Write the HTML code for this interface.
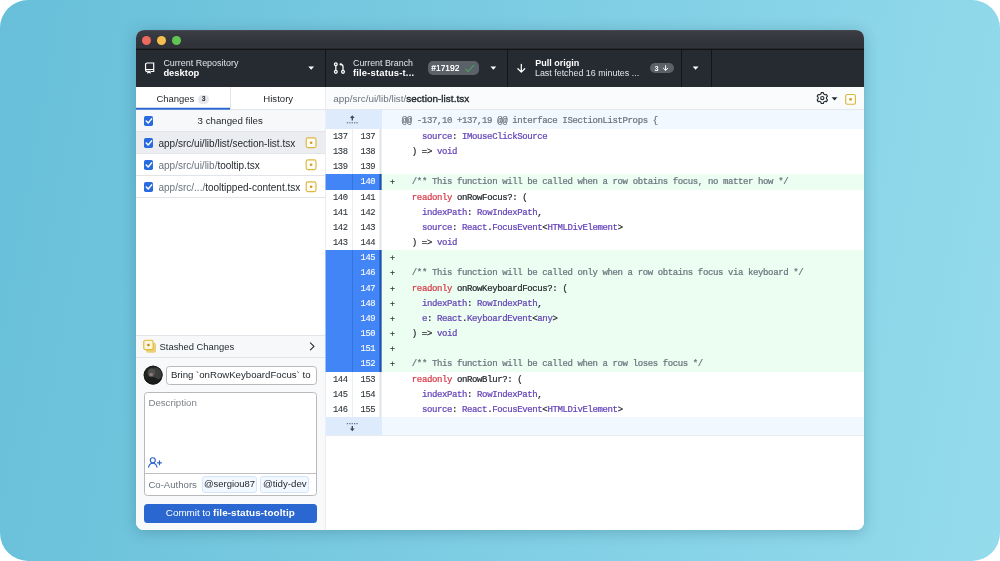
<!DOCTYPE html>
<html><head><meta charset="utf-8"><title>GitHub Desktop</title>
<style>
*{box-sizing:border-box;margin:0;padding:0}
html,body{width:1000px;height:561px;overflow:hidden;background:#fff}
body{font-family:"Liberation Sans",sans-serif;position:relative;color:#24292e}
#bg{position:absolute;left:0;top:0;width:1000px;height:561px;border-radius:28px;background:linear-gradient(100deg,#67bfd9 0%,#7dcde3 50%,#94dbec 100%)}
#win{will-change:transform;position:absolute;left:136px;top:30px;width:728px;height:500px;border-radius:8px;background:#fff;overflow:hidden;box-shadow:0 2px 15px rgba(0,45,65,.24)}
.abs{position:absolute}
#title{position:absolute;left:0;top:0;width:728px;height:20px;background:linear-gradient(#50525a 0,#3b3e45 1px,#363940 6px,#303339 14px);border-bottom:1px solid #121316;box-shadow:inset 0 -1px 0 #25272b}
.tl{position:absolute;top:6px;width:9px;height:9px;border-radius:50%}
#toolbar{position:absolute;left:0;top:20px;width:728px;height:37px;background:#262a31;color:#fff}
.tsep{position:absolute;top:0;width:1px;height:37px;background:#141518}
.t1{position:absolute;font-size:8.9px;color:#e1e4e8;white-space:nowrap;line-height:10px}
.t2{position:absolute;font-size:9.4px;font-weight:700;color:#fff;white-space:nowrap;line-height:10px}
.caret{position:absolute;width:0;height:0;border-left:3px solid transparent;border-right:3px solid transparent;border-top:3.2px solid #fff}
/* sidebar */
#side{position:absolute;left:0;top:57px;width:189.5px;height:443px;background:#fff;border-right:1px solid #eaecee}
.tab{position:absolute;top:0;height:23px;font-size:9.45px;line-height:23px;text-align:center;color:#24292e;border-bottom:1px solid #e1e4e8}
.cnt{display:inline-block;background:#e4e6e9;border-radius:4.5px;font-size:6.8px;font-weight:700;line-height:8.6px;height:8.4px;padding:0 3.4px;vertical-align:0.6px;margin-left:4.2px;color:#24292e}
.frow{position:absolute;left:0;width:189px;height:22px;border-bottom:1px solid #e1e4e8;font-size:10px;line-height:22.6px;white-space:nowrap;color:#24292e}
.frow .p{color:#6a737d}
.cb{position:absolute;left:7.6px;top:5.8px;width:9.8px;height:9.8px;border-radius:1.7px;background:#2a6ae0}
.cb svg{position:absolute;left:0;top:0}
.st{position:absolute;left:169.8px;top:6.6px;width:11px;height:11px;border:1.2px solid #dfb83e;border-radius:2px}
.st:after{content:"";position:absolute;left:2.9px;top:2.9px;width:2.8px;height:2.8px;border-radius:50%;background:#d4982a}
.fn{position:absolute;left:22.5px;top:1px}
.chip{top:389.2px;height:16.4px;border:1px solid #d4e5fb;border-radius:3px;background:#f1f8ff;font-size:9.45px;line-height:14.6px;text-align:center;white-space:nowrap;color:#24292e}
/* diff */
#diff{position:absolute;left:190px;top:57px;width:538px;height:443px;background:#fff}
#dh{position:absolute;left:0;top:0;width:538px;height:23px;background:#fafbfc;border-bottom:1px solid #e5e8eb;font-size:9.9px;line-height:24.4px;padding-left:7.3px;color:#6a737d;white-space:nowrap}
#dh b{font-weight:400;color:#24292e;-webkit-text-stroke:.38px;letter-spacing:.06px}
#hunk{position:absolute;left:0;top:23px;width:538px;height:19px;background:#f1f8ff}
#hunk .hg,#exp .hg{position:absolute;left:0;top:0;width:56px;height:100%;background:#deebfd;box-shadow:-1px 0 0 #eaf1fc}
.mono,code,.g1,.g2,s{font-family:"Liberation Mono",monospace;font-size:9px;letter-spacing:-0.383px;-webkit-text-stroke:.22px}
#hunk .ht{position:absolute;left:75.8px;top:0;line-height:22px;color:#6a737d;white-space:pre}
#rows{position:absolute;left:0;top:42px;width:538px}
.r{position:relative;height:15.17px;line-height:17.4px;width:538px;white-space:pre;color:#24292e}
.r.a{background:#ecfef1}
.g1,.g2{position:absolute;top:0;height:100%;text-align:right;color:#2f353b;font-size:8.8px;-webkit-text-stroke:.1px}
.g1{left:0;width:26.5px;padding-right:3.9px;border-right:1px solid #eceef0}
.g2{left:26.5px;width:26.5px;padding-right:3.8px}
.gs{position:absolute;left:53px;top:0;width:3px;height:100%;background:linear-gradient(90deg,#f0f1f2 0,#f0f1f2 1px,#e1e2e4 1px,#e1e2e4 2px,#f0f1f2 2px,#f0f1f2 3px)}
.r.a .g1,.r.a .g2{background:#4285f6;color:#fff}
.r.a .g1{border-right-color:#3274e2;box-shadow:-1px 0 0 #9cc0fa}
.r.a .gs{background:linear-gradient(90deg,#2e69cf 0,#2e69cf 1px,#1e52b0 1px,#1e52b0 2px,#668ec7 2px,#668ec7 3px)}
.r s{position:absolute;left:63.9px;top:0;text-decoration:none;color:#24292e;font-size:8.2px;-webkit-text-stroke:.1px}
.r code{position:absolute;left:75.8px;top:0}
code b{font-weight:400;color:#d73a49}
code i{font-style:normal;color:#6443b8}
code u{text-decoration:none;color:#6a737d}
#exp{position:absolute;left:0;width:538px;height:19px;background:#f1f8ff;border-bottom:1px solid #e9ecef}
</style></head><body>
<div id="bg"></div>
<div id="win">
 <div id="title">
  <div class="tl" style="left:6px;background:#ed6a5e"></div>
  <div class="tl" style="left:21.3px;background:#f5bf4f"></div>
  <div class="tl" style="left:36px;background:#61c554"></div>
 </div>
 <div id="toolbar">
  <div class="tsep" style="left:189px"></div>
  <div class="tsep" style="left:371px"></div>
  <div class="tsep" style="left:545.3px"></div>
  <div class="tsep" style="left:575px"></div>
  <svg class="abs" style="left:8px;top:11px" width="11" height="14" viewBox="-0.9 -0.5 11 14"><path d="M2.2 1.5H8.8V10H6.2M2.4 10H2.2A1.55 1.55 0 0 1 .65 8.45V3.05A1.55 1.55 0 0 1 2.2 1.5M.9 8H8.7" fill="none" stroke="#fff" stroke-width="1.2"/><path d="M2.3 9.3h3.5v3L4.05 11.2 2.3 12.3z" fill="#fff"/></svg>
  <div class="t1" style="left:27.4px;top:8px;font-size:8.95px">Current Repository</div>
  <div class="t2" style="left:27.4px;top:18.2px">desktop</div>
  <svg class="abs" style="left:172px;top:16px" width="7" height="4" viewBox="-0.3 -0.6 7 4"><path d="M0 0h5.8L2.9 3.2z" fill="#fff"/></svg>
  <svg class="abs" style="left:197px;top:12px" width="13" height="13" viewBox="0 0 13 13"><g fill="none" stroke="#fff" stroke-width="1.25"><circle cx="2.83" cy="2.2" r="1.4"/><circle cx="2.83" cy="9.85" r="1.4"/><circle cx="10" cy="9.85" r="1.4"/><path d="M2.83 3.6v4.8M10 8.4V4.5a2.2 2.2 0 0 0-2.2-2.2H7.8"/></g><path d="M6.1 2.3L8.4 0.55v3.5z" fill="#fff"/></svg>
  <div class="t1" style="left:217px;top:8px;font-size:8.85px">Current Branch</div>
  <div class="t2" style="left:217px;top:18.2px;letter-spacing:.18px">file-status-t...</div>
  <div class="abs" style="left:291.7px;top:10.7px;width:51.7px;height:14.4px;border-radius:5px;background:#5b6169"></div>
  <div class="abs" style="left:295.2px;top:12.9px;font-size:8.5px;line-height:10px;color:#fff;white-space:nowrap;text-shadow:0 0 .4px #fff">#17192</div>
  <svg class="abs" style="left:328px;top:14px" width="11" height="9" viewBox="-0.755 -0.325 11.863 9.759"><path d="M1.2 5.2l2.6 2.6L9.8 1" fill="none" stroke="#48ad5c" stroke-width="1.1" stroke-linecap="round" stroke-linejoin="round"/></svg>
  <svg class="abs" style="left:354px;top:16px" width="7" height="4" viewBox="-0.45 -0.6 7 4"><path d="M0 0h5.8L2.9 3.2z" fill="#fff"/></svg>
  <svg class="abs" style="left:380px;top:13px" width="11" height="11" viewBox="-0.6 -0.5 11 11"><path d="M4.7 0.8v7.6M1.3 5.2l3.4 3.4 3.4-3.4" fill="none" stroke="#fff" stroke-width="1.25" stroke-linecap="round" stroke-linejoin="round"/></svg>
  <div class="t2" style="left:399.2px;top:8px;font-size:9px">Pull origin</div>
  <div class="t1" style="left:399px;top:18.2px;font-size:8.9px">Last fetched 16 minutes ...</div>
  <div class="abs" style="left:513.7px;top:13px;width:24.2px;height:10.2px;border-radius:5.1px;background:#5b6169"></div>
  <div class="abs" style="left:518.4px;top:13.6px;font-size:7.3px;font-weight:700;line-height:10px;color:#fff">3</div>
  <svg class="abs" style="left:526px;top:15px" width="7" height="7" viewBox="-0.6 -0.2 7 7"><path d="M3 0.5v4.6M0.8 3l2.2 2.2L5.2 3" fill="none" stroke="#fff" stroke-width="1" stroke-linecap="round" stroke-linejoin="round"/></svg>
  <svg class="abs" style="left:556px;top:16px" width="7" height="4" viewBox="-0.7 -0.6 7 4"><path d="M0 0h5.8L2.9 3.2z" fill="#fff"/></svg>
 </div>
 <div id="side">
  <div class="tab" style="left:0;width:94px;padding-right:.6px">Changes<span class="cnt">3</span></div><div class="abs" style="left:0;top:20px;width:94px;height:3px;background:linear-gradient(rgba(43,102,208,.25) 0,rgba(43,102,208,.25) 1px,#2b66d0 1px,#2b66d0 2px,#5f8bdb 2px,#5f8bdb 3px)"></div>
  <div class="tab" style="left:94px;width:95.5px;border-left:1px solid #e1e4e8;font-size:9.6px">History</div>
  <div class="frow" style="top:23px;background:#f6f8fa;text-align:center;font-size:9.7px;padding-right:.6px;padding-top:.1px"><div class="cb"><svg width="9.8" height="9.8" viewBox="0 0 10 10"><path d="M2.3 5.2l2 2 3.5-4.3" fill="none" stroke="#fff" stroke-width="1.5" stroke-linecap="round" stroke-linejoin="round"/></svg></div>3 changed files</div>
  <div class="frow" style="top:45px;background:#ebedf0"><div class="cb"><svg width="9.8" height="9.8" viewBox="0 0 10 10"><path d="M2.3 5.2l2 2 3.5-4.3" fill="none" stroke="#fff" stroke-width="1.5" stroke-linecap="round" stroke-linejoin="round"/></svg></div><span class="fn">app/src/ui/lib/list/section-list.tsx</span><svg class="abs" style="left:169px;top:5px" width="12" height="12" viewBox="-0.55 -0.2 12 12"><rect x="0.65" y="0.65" width="9.8" height="9.8" rx="1.8" fill="#fdfcf6" stroke="#dcb742" stroke-width="1.15"/><circle cx="5.55" cy="5.55" r="1.35" fill="#cf9f24"/></svg></div>
  <div class="frow" style="top:67px"><div class="cb"><svg width="9.8" height="9.8" viewBox="0 0 10 10"><path d="M2.3 5.2l2 2 3.5-4.3" fill="none" stroke="#fff" stroke-width="1.5" stroke-linecap="round" stroke-linejoin="round"/></svg></div><span class="fn"><span class="p">app/src/ui/lib/</span>tooltip.tsx</span><svg class="abs" style="left:169px;top:5px" width="12" height="12" viewBox="-0.55 -0.2 12 12"><rect x="0.65" y="0.65" width="9.8" height="9.8" rx="1.8" fill="#fdfcf6" stroke="#dcb742" stroke-width="1.15"/><circle cx="5.55" cy="5.55" r="1.35" fill="#cf9f24"/></svg></div>
  <div class="frow" style="top:89px"><div class="cb"><svg width="9.8" height="9.8" viewBox="0 0 10 10"><path d="M2.3 5.2l2 2 3.5-4.3" fill="none" stroke="#fff" stroke-width="1.5" stroke-linecap="round" stroke-linejoin="round"/></svg></div><span class="fn"><span class="p">app/src/.../</span>tooltipped-content.tsx</span><svg class="abs" style="left:169px;top:5px" width="12" height="12" viewBox="-0.55 -0.2 12 12"><rect x="0.65" y="0.65" width="9.8" height="9.8" rx="1.8" fill="#fdfcf6" stroke="#dcb742" stroke-width="1.15"/><circle cx="5.55" cy="5.55" r="1.35" fill="#cf9f24"/></svg></div>
  <div class="abs" style="left:0;top:248px;width:189px;height:22.5px;background:#f7f8fa;border-top:1px solid #e1e4e8;border-bottom:1px solid #e1e4e8"></div>
  <div class="abs" style="left:0;top:270.5px;width:189px;height:172.5px;background:#f8f9fa"></div>
  <svg class="abs" style="left:7px;top:252px" width="14" height="15" viewBox="-0.1 -0.6 14 15"><rect x="3" y="3.2" width="9.9" height="9.9" rx="1.9" fill="#ecd078"/><rect x="0.65" y="0.65" width="9.4" height="9.4" rx="1.7" fill="#fcf5d9" stroke="#e0b93e" stroke-width="1.15"/><circle cx="5.35" cy="5.35" r="1.3" fill="#c08a1e"/></svg>
  <div class="abs" style="left:23.6px;top:248px;font-size:9.4px;line-height:23.4px;white-space:nowrap;color:#24292e">Stashed Changes</div>
  <svg class="abs" style="left:173px;top:254px" width="7" height="10" viewBox="-0.4 -0.9 7 10"><path d="M1 1l3.6 3.5L1 8" fill="none" stroke="#24292e" stroke-width="1.1" stroke-linecap="round" stroke-linejoin="round"/></svg>
  <svg class="abs" style="left:7px;top:278px" width="20" height="20" viewBox="-0.6 -0.6 20 20"><defs><clipPath id="av"><circle cx="9.5" cy="9.5" r="9.4"/></clipPath><filter id="bl" x="-20%" y="-20%" width="140%" height="140%"><feGaussianBlur stdDeviation="0.7"/></filter></defs><circle cx="9.5" cy="9.5" r="9.4" fill="#222422"/><g clip-path="url(#av)" filter="url(#bl)"><rect x="10" y="2" width="9" height="10" fill="#3a3e39"/><ellipse cx="8" cy="7.2" rx="3.9" ry="4.6" fill="#4d504e"/><ellipse cx="7.6" cy="8.8" rx="2.1" ry="1.7" fill="#857878"/><ellipse cx="7.4" cy="9.4" rx="0.8" ry="0.6" fill="#a08488"/><path d="M0 14C4 10.5 12 10.5 19 15V19H0z" fill="#1c1e1c"/><path d="M11 9L17 12L15 14L10 11z" fill="#3b3f3b"/></g><circle cx="9.5" cy="9.5" r="9" fill="none" stroke="#161816" stroke-width="0.9"/></svg>
  <div class="abs" style="left:30.4px;top:279px;width:150.8px;height:18.6px;border:1px solid #b7b9bc;border-radius:3.5px;background:#fff;font-size:9.65px;line-height:16.2px;padding-left:3.5px;white-space:nowrap;overflow:hidden;color:#24292e">Bring `onRowKeyboardFocus` to</div>
  <div class="abs" style="left:7.6px;top:305.4px;width:173.6px;height:103.4px;border:1px solid #b7b9bc;border-radius:3.5px;background:#fff"></div>
  <div class="abs" style="left:8.6px;top:386.2px;width:171.6px;height:1px;background:#bdbfc2"></div>
  <div class="abs" style="left:12.4px;top:309.6px;font-size:9.7px;line-height:12px;color:#7d838b">Description</div>
  <svg class="abs" style="left:11px;top:369px" width="16" height="13" viewBox="-0.8 -0.6 16 13"><g fill="none" stroke="#2c62c8" stroke-width="1.15" stroke-linecap="round"><circle cx="5" cy="3.6" r="2.5"/><path d="M0.8 10.6c.5-2.6 2.2-4 4.2-4s3.7 1.4 4.2 4M11.7 4.3v3.9M9.75 6.25h3.9"/></g></svg>
  <div class="abs" style="left:12.4px;top:391.8px;font-size:9.6px;line-height:12px;color:#6a737d">Co-Authors</div>
  <div class="abs chip" style="left:66px;width:55px">@sergiou87</div>
  <div class="abs chip" style="left:124.4px;width:48.8px;font-size:9.7px">@tidy-dev</div>
  <div class="abs" style="left:7.6px;top:417px;width:173.6px;height:18.6px;border-radius:3.5px;background:#2b67d0;color:#fff;text-align:center;font-size:9.9px;line-height:18.8px;white-space:nowrap;letter-spacing:-.05px">Commit to <b style="letter-spacing:.09px">file-status-tooltip</b></div>
 </div>
 <div id="diff">
  <div id="dh">app/src/ui/lib/list/<b>section-list.tsx</b><svg class="abs" style="left:490px;top:4px" width="13" height="14" viewBox="-6.825 -7.619 14.083 15.129"><path d="M-1.1,-5.9 L1.1,-5.9 L1.6,-4.3 L2.9,-3.6 L4.5,-3.9 L5.6,-2 L4.5,-0.75 L4.5,0.75 L5.6,2 L4.5,3.9 L2.9,3.6 L1.6,4.3 L1.1,5.9 L-1.1,5.9 L-1.6,4.3 L-2.9,3.6 L-4.5,3.9 L-5.6,2 L-4.5,0.75 L-4.5,-0.75 L-5.6,-2 L-4.5,-3.9 L-2.9,-3.6 L-1.6,-4.3 Z" fill="none" stroke="#24292e" stroke-width="1.2" stroke-linejoin="round"/><circle cx="0" cy="0" r="1.75" fill="none" stroke="#24292e" stroke-width="1.2"/></svg>
<svg class="abs" style="left:505px;top:10px" width="7" height="4" viewBox="-0.717 -0.327 7.724 4.364"><path d="M0 0h6.4L3.2 3.6z" fill="#24292e"/></svg>
<svg class="abs" style="left:519px;top:6px" width="11" height="12" viewBox="0 -0.8 11 12"><rect x="0.65" y="0.65" width="9.8" height="9.8" rx="1.8" fill="#fdfcf6" stroke="#dcb742" stroke-width="1.15"/><circle cx="5.55" cy="5.55" r="1.35" fill="#cf9f24"/></svg></div>
  <div id="hunk"><div class="hg"></div><svg class="abs" style="left:20px;top:4px" width="13" height="11" viewBox="0 -0.4 13 11"><path d="M6.3 0.9L8.7 3.7H7V6.2H5.6V3.7H3.9z" fill="#3e4a5c"/><path d="M0.8 8.4h11" fill="none" stroke="#3e4a5c" stroke-width="0.9" stroke-dasharray="1.3 1.1"/></svg><span class="ht mono">@@ -137,10 +137,19 @@ interface ISectionListProps {</span></div>
  <div id="rows">
<div class="r"><span class="g1">137</span><span class="g2">137</span><span class="gs"></span><code>    <i>source</i>: <i>IMouseClickSource</i></code></div>
<div class="r"><span class="g1">138</span><span class="g2">138</span><span class="gs"></span><code>  ) =&gt; <i>void</i></code></div>
<div class="r"><span class="g1">139</span><span class="g2">139</span><span class="gs"></span><code></code></div>
<div class="r a"><span class="g1"></span><span class="g2">140</span><span class="gs"></span><s>+</s><code>  <u>/** This function will be called when a row obtains focus, no matter how */</u></code></div>
<div class="r"><span class="g1">140</span><span class="g2">141</span><span class="gs"></span><code>  <b>readonly</b> onRowFocus?: (</code></div>
<div class="r"><span class="g1">141</span><span class="g2">142</span><span class="gs"></span><code>    <i>indexPath</i>: <i>RowIndexPath</i>,</code></div>
<div class="r"><span class="g1">142</span><span class="g2">143</span><span class="gs"></span><code>    <i>source</i>: <i>React</i>.<i>FocusEvent</i>&lt;<i>HTMLDivElement</i>&gt;</code></div>
<div class="r"><span class="g1">143</span><span class="g2">144</span><span class="gs"></span><code>  ) =&gt; <i>void</i></code></div>
<div class="r a"><span class="g1"></span><span class="g2">145</span><span class="gs"></span><s>+</s><code></code></div>
<div class="r a"><span class="g1"></span><span class="g2">146</span><span class="gs"></span><s>+</s><code>  <u>/** This function will be called only when a row obtains focus via keyboard */</u></code></div>
<div class="r a"><span class="g1"></span><span class="g2">147</span><span class="gs"></span><s>+</s><code>  <b>readonly</b> onRowKeyboardFocus?: (</code></div>
<div class="r a"><span class="g1"></span><span class="g2">148</span><span class="gs"></span><s>+</s><code>    <i>indexPath</i>: <i>RowIndexPath</i>,</code></div>
<div class="r a"><span class="g1"></span><span class="g2">149</span><span class="gs"></span><s>+</s><code>    <i>e</i>: <i>React</i>.<i>KeyboardEvent</i>&lt;<i>any</i>&gt;</code></div>
<div class="r a"><span class="g1"></span><span class="g2">150</span><span class="gs"></span><s>+</s><code>  ) =&gt; <i>void</i></code></div>
<div class="r a"><span class="g1"></span><span class="g2">151</span><span class="gs"></span><s>+</s><code></code></div>
<div class="r a"><span class="g1"></span><span class="g2">152</span><span class="gs"></span><s>+</s><code>  <u>/** This function will be called when a row loses focus */</u></code></div>
<div class="r"><span class="g1">144</span><span class="g2">153</span><span class="gs"></span><code>  <b>readonly</b> onRowBlur?: (</code></div>
<div class="r"><span class="g1">145</span><span class="g2">154</span><span class="gs"></span><code>    <i>indexPath</i>: <i>RowIndexPath</i>,</code></div>
<div class="r"><span class="g1">146</span><span class="g2">155</span><span class="gs"></span><code>    <i>source</i>: <i>React</i>.<i>FocusEvent</i>&lt;<i>HTMLDivElement</i>&gt;</code></div>
  </div>
  <div id="exp" style="top:330px"><div class="hg"></div><svg class="abs" style="left:20px;top:5px" width="13" height="11" viewBox="0 -0.3 13 11"><path d="M0.8 1.4h11" fill="none" stroke="#3e4a5c" stroke-width="0.9" stroke-dasharray="1.3 1.1"/><path d="M6.3 9L8.7 6.2H7V3.7H5.6V6.2H3.9z" fill="#3e4a5c"/></svg></div>
 </div>
</div>
</body></html>
